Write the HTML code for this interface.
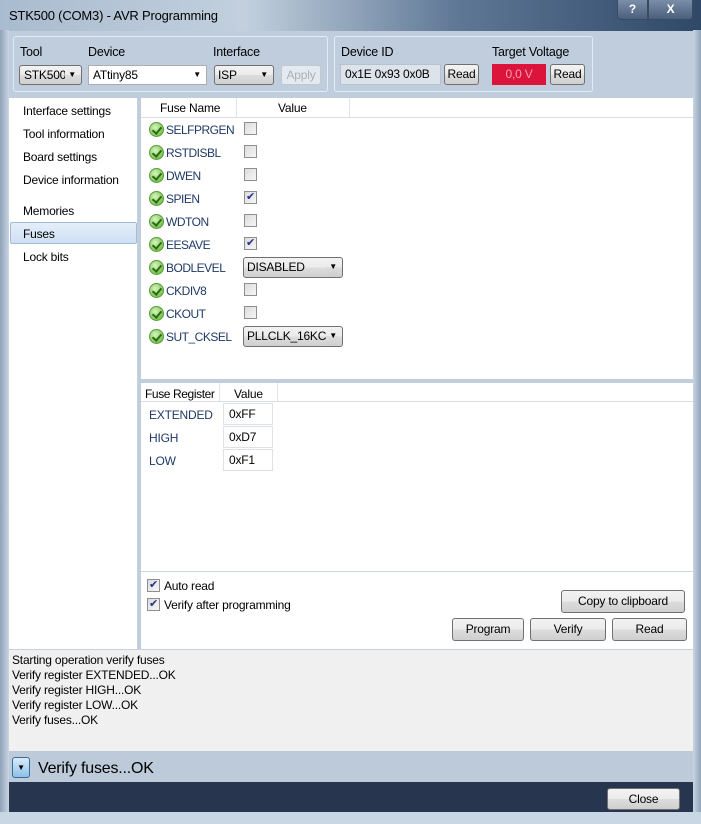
<!DOCTYPE html>
<html><head><style>
*{margin:0;padding:0;box-sizing:border-box}
body{width:701px;height:824px;overflow:hidden;background:#2a3a55;font-family:"Liberation Sans",sans-serif;font-size:12px;color:#000;position:relative;letter-spacing:-0.2px}
.a{position:absolute}
.t{position:absolute;white-space:nowrap;line-height:14px}
.btn{position:absolute;border:1px solid #707070;border-radius:3px;background:linear-gradient(#f2f2f2,#ebebeb 50%,#dddddd 51%,#cfcfcf);text-align:center;font-size:12px;white-space:nowrap}
.cb{position:absolute;width:13px;height:13px;border:1px solid #8e8f8f;background:linear-gradient(135deg,#dcdcdc,#f6f6f6)}
.cb.on::after{content:"✔";position:absolute;left:1px;top:-2px;font-size:11px;color:#24308a}
.ok{position:absolute;width:15px;height:15px;border-radius:50%;background:radial-gradient(circle at 40% 35%,#d8f5c0,#7cc653 70%,#4d9a2e);border:1px solid #5a9a3c}
.ok::after{content:"";position:absolute;left:4px;top:2px;width:4px;height:7px;border:solid #2a6a14;border-width:0 2px 2px 0;transform:rotate(40deg)}
.fn{position:absolute;left:166px;color:#1f3a66;line-height:14px;letter-spacing:-0.5px}
.dd{overflow:hidden}
.dd::after{content:"▼";position:absolute;right:5px;top:0;line-height:18px;font-size:8px;background:inherit;padding-left:3px}
</style></head><body>
<div class="a" style="left:0;top:0;width:701px;height:32px;background:linear-gradient(90deg,#a9bbcf 0,#c2d0de 35%,#5f7896 65%,#2f4868 100%)"></div>
<div class="t" style="left:9px;top:9px;font-size:13px;color:#000">STK500 (COM3) - AVR Programming</div>
<div class="a" style="left:617px;top:0;width:31px;height:20px;border:1px solid #3a4a60;border-top:none;border-radius:0 0 0 4px;background:linear-gradient(#7a8ea8,#4a5f7c);color:#fff;font-weight:bold;text-align:center;line-height:18px">?</div>
<div class="a" style="left:648px;top:0;width:45px;height:20px;border:1px solid #3a4a60;border-top:none;border-radius:0 0 4px 0;background:linear-gradient(#7a8ea8,#4a5f7c);color:#fff;font-weight:bold;text-align:center;line-height:18px">X</div>
<div class="a" style="left:0;top:30px;width:9px;height:794px;background:linear-gradient(90deg,#8fa2b8,#c9d6e3)"></div>
<div class="a" style="left:693px;top:30px;width:8px;height:794px;background:linear-gradient(90deg,#c9d6e3,#8fa2b8)"></div>
<div class="a" style="left:0;top:812px;width:701px;height:12px;background:#c9d6e3"></div>
<div class="a" style="left:9px;top:31px;width:684px;height:67px;background:#bfcddc"></div>
<div class="a" style="left:13px;top:36px;width:315px;height:56px;border:1px solid #e4ecf4;border-radius:3px"></div>
<div class="a" style="left:334px;top:36px;width:259px;height:56px;border:1px solid #e4ecf4;border-radius:3px"></div>
<div class="t" style="left:20px;top:45px;font-size:12.5px">Tool</div>
<div class="t" style="left:88px;top:45px;font-size:12.5px">Device</div>
<div class="t" style="left:213px;top:45px;font-size:12.5px">Interface</div>
<div class="t" style="left:341px;top:45px;font-size:12.5px">Device ID</div>
<div class="t" style="left:492px;top:45px;font-size:12.5px">Target Voltage</div>
<div class="btn dd" style="left:19px;top:65px;width:63px;height:20px;text-align:left;padding-left:4px;line-height:18px">STK500</div>
<div class="a dd" style="left:88px;top:65px;width:119px;height:20px;background:#fff;border:1px solid #abadb3;padding-left:4px;line-height:18px">ATtiny85</div>
<div class="btn dd" style="left:214px;top:65px;width:60px;height:20px;text-align:left;padding-left:3px;line-height:18px">ISP</div>
<div class="a" style="left:281px;top:65px;width:40px;height:20px;border:1px solid #c0c8d2;border-radius:3px;background:#e4eaf0;color:#a8b0b8;text-align:center;line-height:18px">Apply</div>
<div class="a" style="left:340px;top:64px;width:101px;height:21px;background:#dde3ea;border:1px solid #b8c2cc;padding-left:4px;line-height:19px">0x1E 0x93 0x0B</div>
<div class="btn" style="left:444px;top:64px;width:35px;height:21px;line-height:19px">Read</div>
<div class="a" style="left:492px;top:64px;width:54px;height:21px;background:#dc143c;color:#f6a0b0;text-align:center;line-height:21px">0,0 V</div>
<div class="btn" style="left:550px;top:64px;width:35px;height:21px;line-height:19px">Read</div>
<div class="a" style="left:9px;top:98px;width:129px;height:551px;background:#fff;border-right:1px solid #c8d0da"></div>
<div class="a" style="left:138px;top:98px;width:3px;height:551px;background:#bfcddc"></div>
<div class="t" style="left:23px;top:104px">Interface settings</div>
<div class="t" style="left:23px;top:127px">Tool information</div>
<div class="t" style="left:23px;top:150px">Board settings</div>
<div class="t" style="left:23px;top:173px">Device information</div>
<div class="t" style="left:23px;top:204px">Memories</div>
<div class="a" style="left:10px;top:222px;width:127px;height:22px;border:1px solid #a0bcd8;border-radius:2px;background:linear-gradient(#e4eef9,#cfe0f3)"></div>
<div class="t" style="left:23px;top:227px">Fuses</div>
<div class="t" style="left:23px;top:250px">Lock bits</div>
<div class="a" style="left:141px;top:98px;width:552px;height:281px;background:#fff"></div>
<div class="a" style="left:141px;top:117px;width:552px;height:1px;background:#d8dde4"></div>
<div class="a" style="left:236px;top:98px;width:1px;height:19px;background:#e0e4ea"></div>
<div class="a" style="left:349px;top:98px;width:1px;height:19px;background:#e0e4ea"></div>
<div class="t" style="left:160px;top:101px">Fuse Name</div>
<div class="t" style="left:278px;top:101px">Value</div>
<div class="ok" style="left:149px;top:122px"></div><div class="fn" style="top:123px">SELFPRGEN</div><div class="cb" style="left:244px;top:122px"></div>
<div class="ok" style="left:149px;top:145px"></div><div class="fn" style="top:146px">RSTDISBL</div><div class="cb" style="left:244px;top:145px"></div>
<div class="ok" style="left:149px;top:168px"></div><div class="fn" style="top:169px">DWEN</div><div class="cb" style="left:244px;top:168px"></div>
<div class="ok" style="left:149px;top:191px"></div><div class="fn" style="top:192px">SPIEN</div><div class="cb on" style="left:244px;top:191px"></div>
<div class="ok" style="left:149px;top:214px"></div><div class="fn" style="top:215px">WDTON</div><div class="cb" style="left:244px;top:214px"></div>
<div class="ok" style="left:149px;top:237px"></div><div class="fn" style="top:238px">EESAVE</div><div class="cb on" style="left:244px;top:237px"></div>
<div class="ok" style="left:149px;top:260px"></div><div class="fn" style="top:261px">BODLEVEL</div><div class="btn dd" style="left:243px;top:257px;width:100px;height:21px;text-align:left;padding-left:3px;line-height:19px">DISABLED</div>
<div class="ok" style="left:149px;top:283px"></div><div class="fn" style="top:284px">CKDIV8</div><div class="cb" style="left:244px;top:283px"></div>
<div class="ok" style="left:149px;top:306px"></div><div class="fn" style="top:307px">CKOUT</div><div class="cb" style="left:244px;top:306px"></div>
<div class="ok" style="left:149px;top:329px"></div><div class="fn" style="top:330px">SUT_CKSEL</div><div class="btn dd" style="left:243px;top:326px;width:100px;height:21px;text-align:left;padding-left:3px;line-height:19px">PLLCLK_16KCk</div>
<div class="a" style="left:141px;top:379px;width:552px;height:4px;background:#bfcddc"></div>
<div class="a" style="left:141px;top:383px;width:552px;height:188px;background:#fff"></div>
<div class="a" style="left:141px;top:401px;width:552px;height:1px;background:#d8dde4"></div>
<div class="a" style="left:219px;top:383px;width:1px;height:18px;background:#e0e4ea"></div>
<div class="a" style="left:277px;top:383px;width:1px;height:18px;background:#e0e4ea"></div>
<div class="t" style="left:145px;top:387px;letter-spacing:-0.4px">Fuse Register</div>
<div class="t" style="left:234px;top:387px">Value</div>
<div class="t" style="left:149px;top:408px;color:#1f3a66">EXTENDED</div>
<div class="t" style="left:149px;top:431px;color:#1f3a66">HIGH</div>
<div class="t" style="left:149px;top:454px;color:#1f3a66">LOW</div>
<div class="a" style="left:223px;top:403px;width:50px;height:22px;border:1px solid #dde2e8;padding-left:5px;line-height:20px">0xFF</div>
<div class="a" style="left:223px;top:426px;width:50px;height:22px;border:1px solid #dde2e8;padding-left:5px;line-height:20px">0xD7</div>
<div class="a" style="left:223px;top:449px;width:50px;height:22px;border:1px solid #dde2e8;padding-left:5px;line-height:20px">0xF1</div>
<div class="a" style="left:141px;top:571px;width:552px;height:1px;background:#d0d8e2"></div>
<div class="a" style="left:141px;top:572px;width:552px;height:77px;background:#fff"></div>
<div class="cb on" style="left:147px;top:579px"></div><div class="t" style="left:164px;top:579px">Auto read</div>
<div class="cb on" style="left:147px;top:598px"></div><div class="t" style="left:164px;top:598px">Verify after programming</div>
<div class="btn" style="left:561px;top:590px;width:124px;height:23px;line-height:21px">Copy to clipboard</div>
<div class="btn" style="left:452px;top:618px;width:72px;height:23px;line-height:21px">Program</div>
<div class="btn" style="left:530px;top:618px;width:76px;height:23px;line-height:21px">Verify</div>
<div class="btn" style="left:612px;top:618px;width:75px;height:23px;line-height:21px">Read</div>
<div class="a" style="left:9px;top:649px;width:684px;height:102px;background:#f0f0f0;border-top:1px solid #c8d0da"></div>
<div class="t" style="left:12px;top:653px">Starting operation verify fuses</div>
<div class="t" style="left:12px;top:668px">Verify register EXTENDED...OK</div>
<div class="t" style="left:12px;top:683px">Verify register HIGH...OK</div>
<div class="t" style="left:12px;top:698px">Verify register LOW...OK</div>
<div class="t" style="left:12px;top:713px">Verify fuses...OK</div>
<div class="a" style="left:9px;top:751px;width:684px;height:31px;background:#bccada"></div>
<div class="a" style="left:12px;top:757px;width:18px;height:21px;border:1px solid #3a6a9a;border-radius:3px;background:linear-gradient(#d8ecfb,#8cc0e8);font-size:8px;text-align:center;line-height:19px">▼</div>
<div class="t" style="left:38px;top:760px;font-size:16px;line-height:17px">Verify fuses...OK</div>
<div class="a" style="left:9px;top:782px;width:684px;height:30px;background:#27354f"></div>
<div class="btn" style="left:607px;top:788px;width:73px;height:22px;line-height:20px">Close</div>
</body></html>
